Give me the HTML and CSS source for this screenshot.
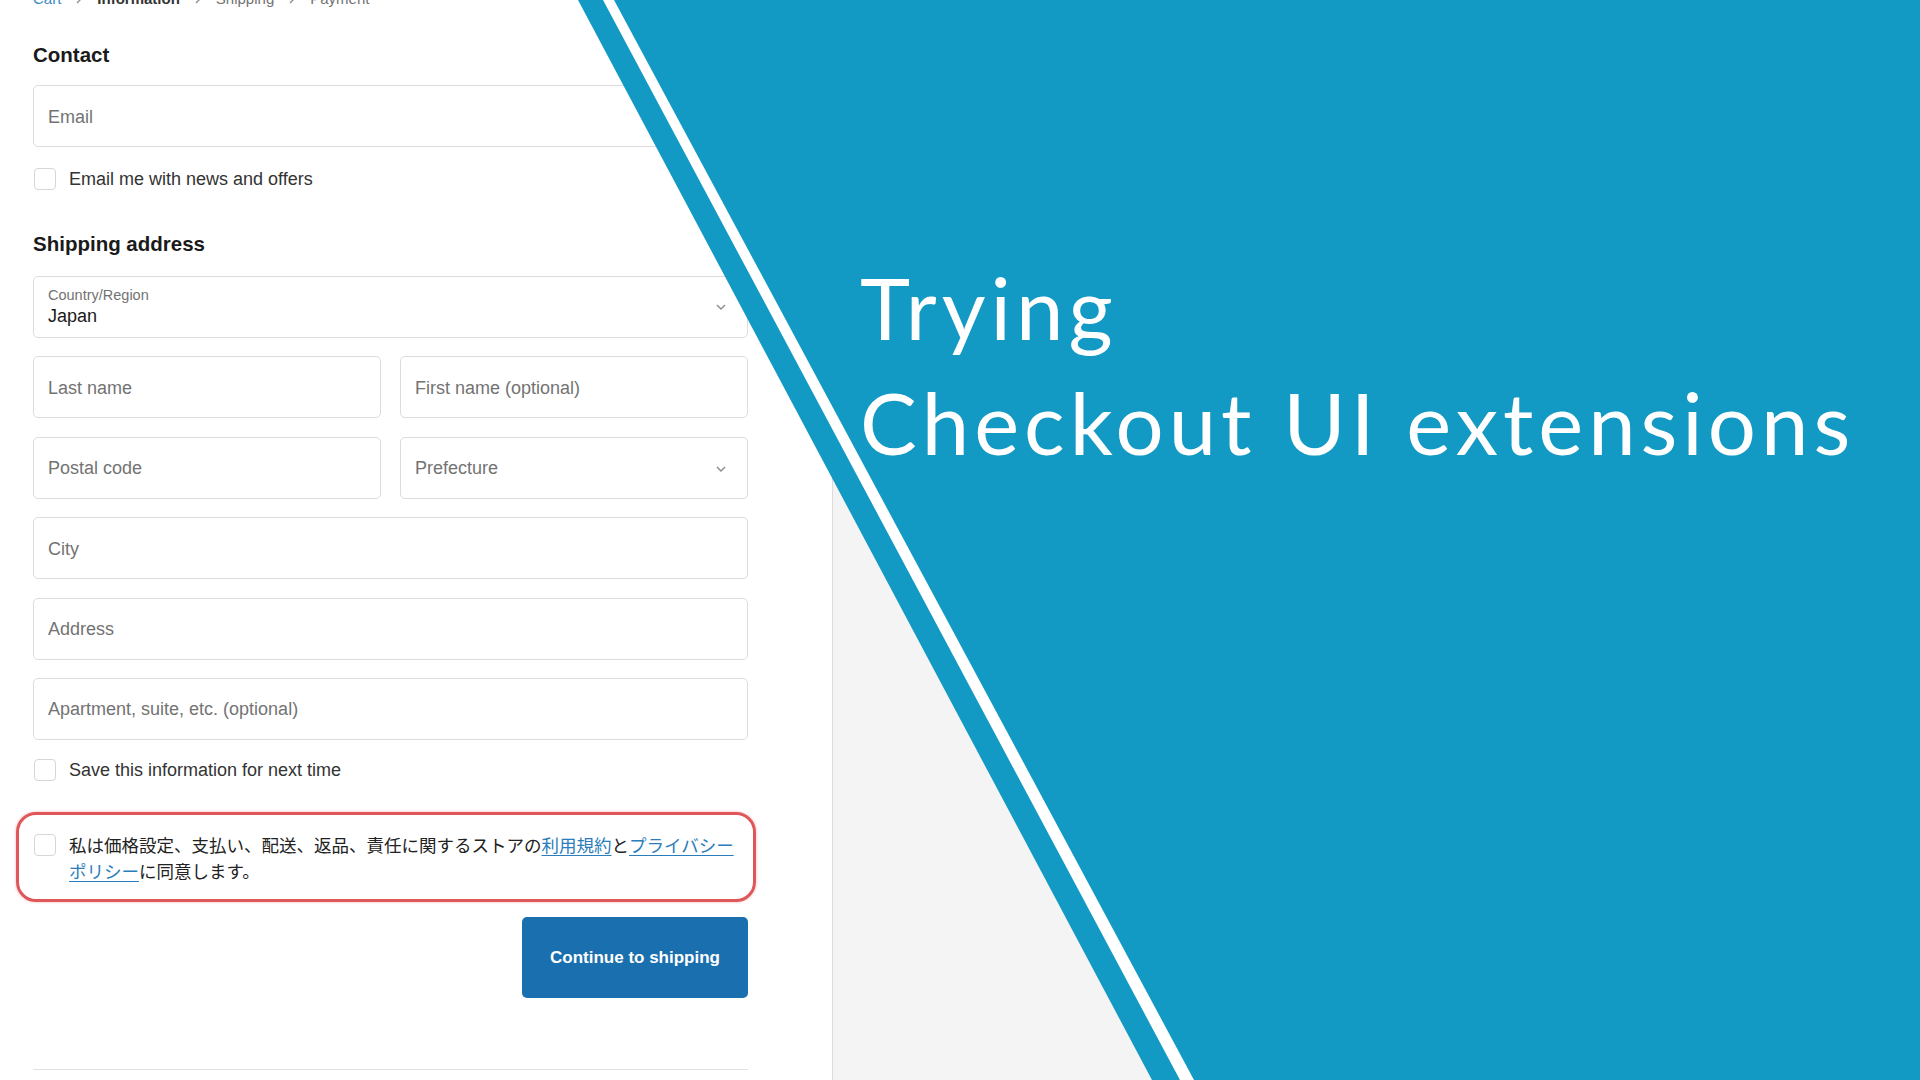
FILE: index.html
```html
<!DOCTYPE html>
<html lang="ja">
<head>
<meta charset="utf-8">
<title>Trying Checkout UI extensions</title>
<link rel="stylesheet" href="styles.css">
</head>
<body>
<div class="page">
  <main class="checkout">
    <nav class="crumbs">
      <span class="crumb crumb-link">Cart</span>
      <svg class="crumb-sep" viewBox="0 0 8 12" width="8" height="12"><path d="M2 2l4 4-4 4" fill="none" stroke="#8a8a8a" stroke-width="1.3"/></svg>
      <span class="crumb crumb-current">Information</span>
      <svg class="crumb-sep" viewBox="0 0 8 12" width="8" height="12"><path d="M2 2l4 4-4 4" fill="none" stroke="#8a8a8a" stroke-width="1.3"/></svg>
      <span class="crumb">Shipping</span>
      <svg class="crumb-sep" viewBox="0 0 8 12" width="8" height="12"><path d="M2 2l4 4-4 4" fill="none" stroke="#8a8a8a" stroke-width="1.3"/></svg>
      <span class="crumb">Payment</span>
    </nav>

    <h2 class="section-title contact-title">Contact</h2>
    <div class="field"><span class="placeholder">Email</span></div>
    <label class="check-row news-row"><span class="checkbox"></span><span class="check-label">Email me with news and offers</span></label>

    <h2 class="section-title shipping-title">Shipping address</h2>
    <div class="fields">
      <div class="field select">
        <div class="select-text">
          <span class="field-label">Country/Region</span>
          <span class="field-value">Japan</span>
        </div>
        <svg class="chevron" viewBox="0 0 12 8" width="12" height="8"><path d="M2 2l4 4 4-4" fill="none" stroke="#8a8a8a" stroke-width="1.4"/></svg>
      </div>
      <div class="field-row">
        <div class="field"><span class="placeholder">Last name</span></div>
        <div class="field"><span class="placeholder">First name (optional)</span></div>
      </div>
      <div class="field-row">
        <div class="field"><span class="placeholder">Postal code</span></div>
        <div class="field select">
          <span class="placeholder">Prefecture</span>
          <svg class="chevron" viewBox="0 0 12 8" width="12" height="8"><path d="M2 2l4 4 4-4" fill="none" stroke="#8a8a8a" stroke-width="1.4"/></svg>
        </div>
      </div>
      <div class="field"><span class="placeholder">City</span></div>
      <div class="field"><span class="placeholder">Address</span></div>
      <div class="field"><span class="placeholder">Apartment, suite, etc. (optional)</span></div>
    </div>
    <label class="check-row save-row"><span class="checkbox"></span><span class="check-label">Save this information for next time</span></label>

    <div class="consent">
      <span class="checkbox consent-box"></span>
      <p class="consent-text">私は価格設定、支払い、配送、返品、責任に関するストアの<a class="link">利用規約</a>と<a class="link">プライバシーポリシー</a>に同意します。</p>
    </div>

    <div class="actions">
      <button class="btn-primary">Continue to shipping</button>
    </div>
    <div class="divider"></div>
  </main>
  <aside class="summary"></aside>
</div>

<div class="banner">
  <svg class="banner-shape" viewBox="0 0 1920 1080" preserveAspectRatio="none">
    <polygon points="578,0 1920,0 1920,1080 1152,1080" fill="#139ac4"/>
    <polygon points="603,0 614,0 1194,1080 1180,1080" fill="#ffffff"/>
  </svg>
  <h1 class="banner-title">Trying<br>Checkout UI extensions</h1>
</div>
</body>
</html>
```

FILE: styles.css
```css
* { box-sizing: border-box; }

html, body {
  margin: 0;
  padding: 0;
  width: 1920px;
  height: 1080px;
  overflow: hidden;
  background: #ffffff;
  font-family: "Liberation Sans", Arial, "Noto Sans CJK JP", sans-serif;
  color: #333333;
}

.page {
  display: grid;
  grid-template-columns: 833px 1fr;
  height: 1080px;
}

.checkout {
  background: #ffffff;
  border-right: 1px solid #dcdcdc;
  padding: 0 84px 0 33px;
  display: flex;
  flex-direction: column;
}

.summary {
  background: #f4f4f4;
}

/* breadcrumbs */
.crumbs {
  display: flex;
  align-items: center;
  gap: 14px;
  margin-top: -9px;
  height: 15px;
  font-size: 15px;
  line-height: 15px;
  color: #737373;
}
.crumb-link { color: #3a8cc4; }
.crumb-current { color: #333333; font-weight: 700; }
.crumb-sep { flex: none; }

.section-title {
  margin: 0;
  font-size: 20.5px;
  line-height: 24px;
  font-weight: 700;
  color: #1a1a1a;
}
.contact-title { margin-top: 37px; }
.shipping-title { margin-top: 42px; }

.field {
  height: 62px;
  border: 1px solid #dcdcdc;
  border-radius: 5px;
  background: #ffffff;
  padding: 2px 14px 0;
  display: flex;
  align-items: center;
  font-size: 18px;
}
.contact-title + .field { margin-top: 18px; }

.placeholder { color: #737373; }

.select { justify-content: space-between; padding-right: 20px; padding-top: 0; }
.select-text {
  display: flex;
  flex-direction: column;
  gap: 2px;
}
.field-label {
  font-size: 14.5px;
  line-height: 17px;
  color: #737373;
}
.field-value {
  font-size: 18px;
  line-height: 21px;
  color: #1a1a1a;
}
.chevron { flex: none; }

.fields {
  margin-top: 20px;
  display: flex;
  flex-direction: column;
  gap: 18.4px;
}
.field-row {
  display: grid;
  grid-template-columns: 1fr 1fr;
  gap: 19px;
}
.field-row .select { padding-top: 2px; }

.check-row {
  display: flex;
  align-items: center;
  gap: 13px;
  padding-left: 1px;
  font-size: 18px;
  line-height: 22px;
  color: #333333;
}
.news-row { margin-top: 21px; }
.save-row { margin-top: 19px; }

.checkbox {
  flex: none;
  width: 22px;
  height: 22px;
  border: 1px solid #d6d6d6;
  border-radius: 4px;
  background: #ffffff;
}

.consent {
  margin: 31px -8px 0 -17px;
  border: 3px solid #e0575a;
  border-radius: 20px;
  box-shadow: 0 0 3px rgba(224, 87, 90, 0.45);
  padding: 17px 12px 15px 15px;
  display: flex;
  align-items: flex-start;
  gap: 13px;
}
.consent-box { margin-top: 2px; }
.consent-text {
  margin: 0;
  flex: 1;
  font-family: "Noto Sans CJK JP", "Liberation Sans", sans-serif;
  font-size: 17.5px;
  line-height: 26px;
  color: #222222;
}
.link {
  color: #2a7dba;
  text-decoration: underline;
  text-underline-offset: 3px;
}

.actions {
  margin-top: 15px;
  display: flex;
  justify-content: flex-end;
}
.btn-primary {
  width: 226px;
  height: 81px;
  border: 0;
  border-radius: 5px;
  background: #1a6faf;
  color: #ffffff;
  padding-top: 3px;
  font-family: "Liberation Sans", Arial, sans-serif;
  font-size: 17px;
  font-weight: 700;
}

.divider {
  margin-top: 71px;
  border-top: 1px solid #e1e1e1;
}

/* decorative banner overlay */
.banner {
  position: absolute;
  inset: 0;
  pointer-events: none;
  padding: 250px 0 0 860px;
}
.banner-shape {
  position: absolute;
  inset: 0;
  width: 100%;
  height: 100%;
}
.banner-title {
  position: relative;
  margin: 0;
  font-family: "Lato", "Open Sans", sans-serif;
  font-weight: 400;
  font-size: 85px;
  line-height: 115px;
  letter-spacing: 5px;
  color: #ffffff;
  white-space: nowrap;
}
```
